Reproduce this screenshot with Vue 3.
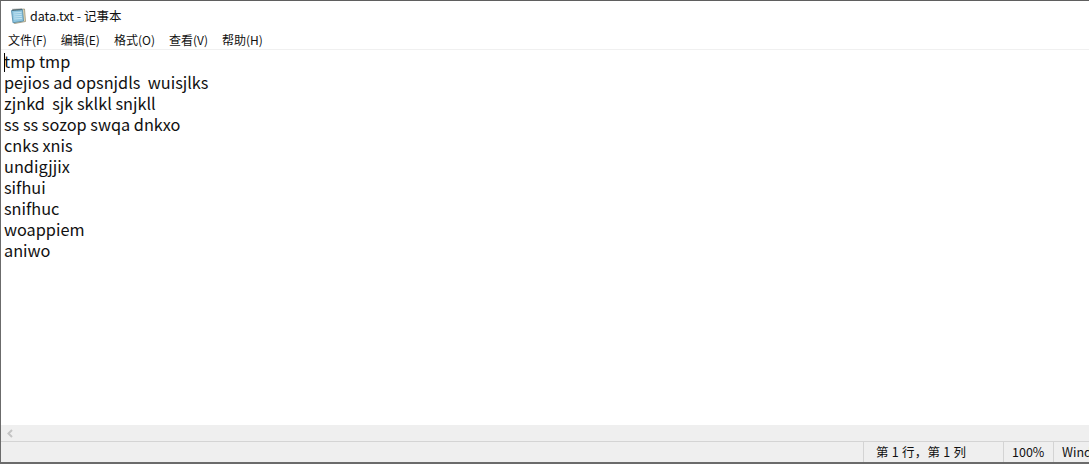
<template>
  <div class="window">
    <div class="titlebar">
      <svg class="app-icon" viewBox="0 0 16 16" width="16" height="16">
        <path d="M3 2L14.5 1L15.5 13.5L4.5 15.5Z" fill="#e9dcb8" stroke="#8a8468" stroke-width="0.7"/>
        <path d="M1.5 2.5L12.5 1.5L13.5 13L3 14.8Z" fill="#8fc6e0" stroke="#4d87a6" stroke-width="0.8"/>
        <path d="M3.5 5L11.5 4.4M3.7 7L11.7 6.4M3.9 9L11.9 8.4M4.1 11L12.1 10.4" stroke="#cfe8f4" stroke-width="0.8"/>
        <path d="M3 .8V3M5 .7V2.8M7 .6V2.6M9 .5V2.5M11 .4V2.3" stroke="#2f3a40" stroke-width="0.8"/>
      </svg>
      <span class="title">data.txt - 记事本</span>
    </div>
    <div class="menubar">
      <span v-for="item in menus" :key="item" class="menu-item">{{ item }}</span>
    </div>
    <div class="editor">
      <span class="caret"></span>
      <div v-for="(line, i) in lines" :key="i" class="line">{{ line }}</div>
    </div>
    <div class="hscroll">
      <svg viewBox="0 0 8 9" width="8" height="9">
        <path d="M6 1L2.5 4.5L6 8" fill="none" stroke="#c4c4c4" stroke-width="2"/>
      </svg>
    </div>
    <div class="statusbar">
      <div class="cell pos">第 1 行，第 1 列</div>
      <div class="cell zoom">100%</div>
      <div class="cell eol">Wind</div>
    </div>
  </div>
</template>

<script setup>
const menus = ['文件(F)', '编辑(E)', '格式(O)', '查看(V)', '帮助(H)']

const lines = [
  'tmp tmp',
  'pejios ad opsnjdls  wuisjlks',
  'zjnkd  sjk sklkl snjkll',
  'ss ss sozop swqa dnkxo',
  'cnks xnis',
  'undigjjix',
  'sifhui',
  'snifhuc',
  'woappiem',
  'aniwo',
]
</script>

<style>
html,
body {
  margin: 0;
  overflow: hidden;
  background: #fff;
}
</style>

<style scoped>
.window {
  width: 1089px;
  height: 464px;
  box-sizing: border-box;
  display: flex;
  flex-direction: column;
  overflow: hidden;
  border-top: 1px solid #5f5f5f;
  border-left: 1px solid #6b6b6b;
  border-bottom: 2px solid #6b6b6b;
  background: #fff;
  font-family: "Noto Sans CJK SC", "Noto Sans", sans-serif;
  color: #111;
}

.titlebar {
  height: 29px;
  flex: none;
  display: flex;
  align-items: center;
  padding-left: 9px;
  gap: 4px;
}

.title {
  font-size: 12.5px;
  white-space: nowrap;
}

.menubar {
  height: 20px;
  flex: none;
  display: flex;
  align-items: center;
  padding-left: 7px;
  box-sizing: border-box;
  gap: 14px;
  font-size: 12px;
  line-height: 18px;
  border-bottom: 1px solid #f0f0f0;
}

.menu-item {
  white-space: nowrap;
}

.editor {
  flex: 1;
  position: relative;
  padding: 1px 0 0 3px;
  font-size: 16.3px;
  line-height: 21px;
  color: #111;
  overflow: hidden;
}

.line {
  height: 21px;
  white-space: pre;
}

.caret {
  position: absolute;
  left: 3px;
  top: 3px;
  width: 1px;
  height: 19px;
  background: #000;
}

.hscroll {
  height: 16px;
  flex: none;
  display: flex;
  align-items: center;
  padding-left: 5px;
  background: #efefef;
}

.statusbar {
  height: 21px;
  flex: none;
  display: flex;
  box-sizing: border-box;
  justify-content: flex-end;
  background: #efefef;
  border-top: 1px solid #d4d4d4;
  font-size: 12.5px;
  line-height: 20px;
  white-space: nowrap;
  overflow: hidden;
}

.cell {
  border-left: 1px solid #d4d4d4;
  box-sizing: border-box;
  overflow: hidden;
  padding-left: 12px;
}

.pos {
  width: 140px;
  letter-spacing: 0.25px;
}

.zoom {
  width: 50px;
  padding-left: 8px;
}

.eol {
  width: 36px;
  padding-left: 8px;
}
</style>
